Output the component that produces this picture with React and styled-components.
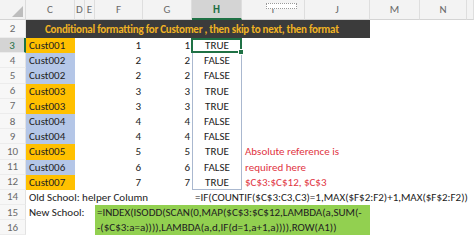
import React from 'react';
import styled, { createGlobalStyle } from 'styled-components';

const GlobalStyle = createGlobalStyle`
  html, body {
    margin: 0;
    padding: 0;
    background: #fff;
    overflow: hidden;
  }
  body {
    font-family: Carlito, Lato, "Liberation Sans", sans-serif;
  }
`;

const COLS = [
  { key: 'C', w: '49px' },
  { key: 'D', w: '10px' },
  { key: 'E', w: '10px' },
  { key: 'F', w: '48px' },
  { key: 'G', w: '49px' },
  { key: 'H', w: '50px', active: true },
  { key: 'I', w: '63px' },
  { key: 'J', w: '65px' },
  { key: 'M', w: '50px' },
  { key: 'N', w: '47px' },
  { key: '', w: '1fr' },
];

const ROWS = [
  ['Cust001', 1, 'TRUE', 'orange'],
  ['Cust002', 2, 'FALSE', 'blue'],
  ['Cust002', 2, 'FALSE', 'blue'],
  ['Cust003', 3, 'TRUE', 'orange'],
  ['Cust003', 3, 'TRUE', 'orange'],
  ['Cust004', 4, 'FALSE', 'blue'],
  ['Cust004', 4, 'FALSE', 'blue'],
  ['Cust005', 5, 'TRUE', 'orange'],
  ['Cust006', 6, 'FALSE', 'blue'],
  ['Cust007', 7, 'TRUE', 'orange'],
];

const NOTES = ['Absolute reference is', 'required here', '$C$3:$C$12, $C$3'];

const FILLS = {
  orange: '#ffc000',
  blue: '#b4c6e7',
  green: '#92d050',
};

const Sheet = styled.div`
  display: grid;
  grid-template-columns: 26px ${COLS.map(c => c.w).join(' ')};
  grid-template-rows: 20px 18px repeat(13, 15.2px) 1fr;
  width: 474px;
  height: 240px;
  font-size: 11px;
  color: #222;
`;

const Corner = styled.div`
  grid-column: 1;
  grid-row: 1;
  background: #f3f3f3;
  border-bottom: 1px solid #d4d4d4;
  border-right: 1px solid #dcdcdc;
  position: relative;

  &::after {
    content: '';
    position: absolute;
    right: 2px;
    bottom: 2px;
    border-style: solid;
    border-width: 0 0 11px 11px;
    border-color: transparent transparent #bdbdbd transparent;
  }
`;

const ColHeader = styled.div`
  grid-row: 1;
  grid-column: ${p => p.$col};
  display: flex;
  align-items: center;
  justify-content: center;
  background: ${p => (p.$active ? '#d4d4d4' : '#f3f3f3')};
  color: ${p => (p.$active ? '#1f6e43' : '#6a6a6a')};
  font-weight: ${p => (p.$active ? 700 : 400)};
  border-right: 1px solid #dedede;
  border-bottom: ${p => (p.$active ? '2px solid #1f7145' : '1px solid #d4d4d4')};
  box-sizing: border-box;
  font-size: 11px;
  position: relative;
`;

const ResizeTip = styled.div`
  position: absolute;
  left: 24px;
  top: 3px;
  width: 29px;
  height: 4px;
  border: 1px dotted #9a9a9a;
  background: #fff;
`;

const RowHeader = styled.div`
  grid-column: 1;
  grid-row: ${p => p.$row};
  display: flex;
  align-items: center;
  justify-content: center;
  background: ${p => (p.$active ? '#d4d4d4' : '#f7f7f7')};
  color: ${p => (p.$active ? '#1f6e43' : '#6a6a6a')};
  border-right: ${p => (p.$active ? '2px solid #1f7145' : '1px solid #e2e2e2')};
  border-bottom: 1px solid #ececec;
  box-sizing: border-box;
  font-size: 11px;
`;

const Cell = styled.div`
  grid-column: ${p => p.$col} / span ${p => p.$span || 1};
  grid-row: ${p => p.$row} / span ${p => p.$rowSpan || 1};
  display: flex;
  align-items: center;
  justify-content: ${p => (p.$align === 'right' ? 'flex-end' : p.$align === 'center' ? 'center' : 'flex-start')};
  padding: 0 ${p => (p.$align === 'right' ? '2px' : '3px')};
  background: ${p => (p.$fill ? FILLS[p.$fill] : 'transparent')};
  color: ${p => p.$color || '#222'};
  white-space: nowrap;
  overflow: visible;
  line-height: 15.2px;
  min-width: 0;
`;

const Banner = styled.div`
  grid-column: 2 / span 8;
  grid-row: 2;
  background: #3b3b3b;
  color: #f0b323;
  font-weight: 700;
  letter-spacing: -0.25px;
  display: flex;
  align-items: center;
  padding-left: 19px;
  white-space: nowrap;
  overflow: hidden;
`;

const FormulaBlock = styled.div`
  grid-column: 5 / span 5;
  grid-row: 14 / span 2;
  background: ${FILLS.green};
  padding: 0 2px;
  line-height: 15.2px;
  white-space: nowrap;
  overflow: hidden;
`;

const FormulaLine = styled.div`
  display: block;
`;

const RangeBox = styled.div`
  grid-column: 7;
  grid-row: 3 / span 10;
  border: 1px solid #aab8cf;
  border-top: none;
  pointer-events: none;
`;

const Selection = styled.div`
  grid-column: 7;
  grid-row: 3;
  border: 2px solid #1f7145;
  margin: 0 0 0 -1px;
  position: relative;
  pointer-events: none;

  &::after {
    content: '';
    position: absolute;
    right: -4px;
    bottom: -4px;
    width: 4px;
    height: 4px;
    background: #1f7145;
    border: 1px solid #fff;
  }
`;

const rowNumbers = [2, 3, 4, 5, 6, 7, 8, 9, 10, 11, 12, 14, 15, 16];

export default function App() {
  return (
    <>
      <GlobalStyle />
      <Sheet>
        <Corner />
        {COLS.map((c, i) => (
          <ColHeader key={i} $col={i + 2} $active={c.active}>
            {c.key}
            {c.key === 'I' && <ResizeTip />}
          </ColHeader>
        ))}

        {rowNumbers.map((n, i) => (
          <RowHeader key={n} $row={i + 2} $active={n === 3}>
            {n}
          </RowHeader>
        ))}

        <Banner>Conditional formatting for Customer , then skip to next, then format</Banner>

        {ROWS.map(([name, num, flag, fill], i) => (
          <React.Fragment key={i}>
            <Cell $col={2} $row={i + 3} $fill={fill}>{name}</Cell>
            <Cell $col={5} $row={i + 3} $align="right">{num}</Cell>
            <Cell $col={6} $row={i + 3} $align="right">{num}</Cell>
            <Cell $col={7} $row={i + 3} $align="center">{flag}</Cell>
          </React.Fragment>
        ))}

        {NOTES.map((t, i) => (
          <Cell key={t} $col={8} $row={i + 10} $span={3} $color="#e1343f">{t}</Cell>
        ))}

        <RangeBox />
        <Selection />

        <Cell $col={2} $row={13} $span={5}>Old School: helper Column</Cell>
        <Cell $col={7} $row={13} $span={5}>=IF(COUNTIF($C$3:C3,C3)=1,MAX($F$2:F2)+1,MAX($F$2:F2))</Cell>
        <Cell $col={2} $row={14} $span={3}>New School:</Cell>
        <FormulaBlock>
          <FormulaLine>=INDEX(ISODD(SCAN(0,MAP($C$3:$C$12,LAMBDA(a,SUM(-</FormulaLine>
          <FormulaLine>-($C$3:a=a)))),LAMBDA(a,d,IF(d=1,a+1,a)))),ROW(A1))</FormulaLine>
        </FormulaBlock>
      </Sheet>
    </>
  );
}
